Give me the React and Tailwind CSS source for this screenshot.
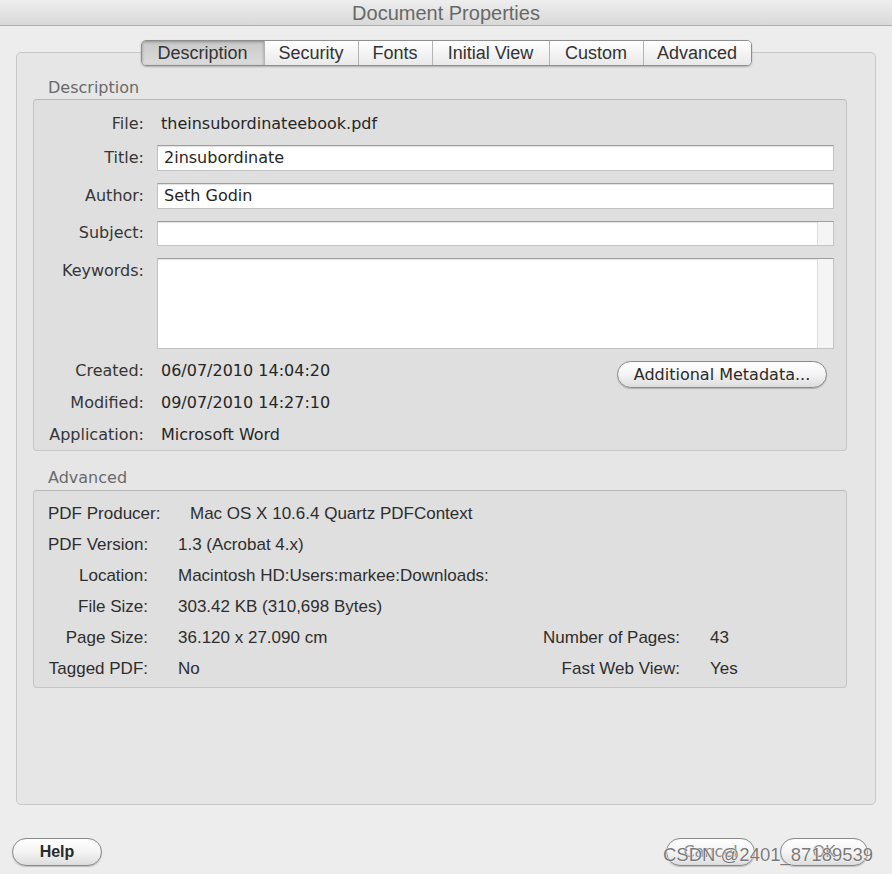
import React from "react";

const tabs = [
  { label: "Description", w: "w-[122px]", active: true },
  { label: "Security", w: "w-[94px]" },
  { label: "Fonts", w: "w-[74px]" },
  { label: "Initial View", w: "w-[117px]" },
  { label: "Custom", w: "w-[94px]" },
  { label: "Advanced", w: "w-[108px]" },
];

function Field({ h = "h-[26px]", scroll = false, children }) {
  return (
    <div
      className={`relative flex-1 ${h} bg-white border border-[#c3c3c3] border-t-[#9e9e9e] shadow-[inset_0_1px_1px_rgba(0,0,0,0.12)] flex ${
        scroll ? "items-start" : "items-center"
      }`}
    >
      <div className="flex-1 pl-[6px] text-[16px] leading-[24px] text-[#262626]">{children}</div>
      {scroll && <div className="w-[16px] self-stretch border-l border-[#dcdcdc] bg-[#f5f5f5]" />}
    </div>
  );
}

function PillButton({ w, h = "h-[28px]", children, bold = false, extra = "" }) {
  return (
    <div
      className={`${w} ${h} shrink-0 rounded-full border border-[#8a8a8a] bg-gradient-to-b from-[#ffffff] via-[#f4f4f4] to-[#dddddd] shadow-[0_1px_1px_rgba(0,0,0,0.2),inset_0_0_1px_rgba(0,0,0,0.15)] flex items-center justify-center ${extra}`}
    >
      <span
        className={
          bold
            ? "font-['Liberation_Sans',sans-serif] font-bold text-[16px] text-[#2a2a2a]"
            : "font-['DejaVu_Sans',sans-serif] text-[16px] text-[#2a2a2a]"
        }
      >
        {children}
      </span>
    </div>
  );
}

function DescRow({ label, children, mt, top = false, fixed = false }) {
  return (
    <div className={`flex ${top ? "items-start" : "items-center"} ${fixed ? "h-[26px]" : ""} ${mt}`}>
      <div className="w-[110px] text-right text-[16px] leading-[26px] text-[#363636] whitespace-nowrap">{label}</div>
      <div className="ml-[13px] flex-1 flex items-center h-full">{children}</div>
    </div>
  );
}

function AdvRow({ label, value, rlabel, rvalue, producer = false }) {
  return (
    <div className="h-[31px] flex items-center">
      <div className={`w-[100px] whitespace-nowrap ${producer ? "text-left" : "text-right"}`}>{label}</div>
      <div className={`${producer ? "ml-[42px] w-[320px]" : "ml-[30px] w-[332px]"} whitespace-nowrap`}>{value}</div>
      <div className="w-[170px] text-right whitespace-nowrap">{rlabel}</div>
      <div className="ml-[30px] whitespace-nowrap">{rvalue}</div>
    </div>
  );
}

export default function App() {
  return (
    <div className="w-[892px] h-[874px] bg-[#ededed] flex flex-col relative overflow-hidden font-['DejaVu_Sans',sans-serif] text-[#2b2b2b]">
      {/* title bar */}
      <div className="h-[26px] shrink-0 flex items-center justify-center bg-gradient-to-b from-[#eeeeee] to-[#d9d9d9] border-b border-[#b0b0b0] font-['Liberation_Sans',sans-serif] text-[20px] text-[#686868]">
        Document Properties
      </div>

      {/* tabs */}
      <div className="flex justify-center mt-[14px] -mb-[14px] relative z-10">
        <div className="flex h-[26px] rounded-[5px] border border-[#8e8e8e] overflow-hidden shadow-[0_1px_2px_rgba(0,0,0,0.25)] font-['Liberation_Sans',sans-serif] text-[18px] text-[#333]">
          {tabs.map((t, i) => (
            <div
              key={t.label}
              className={`${t.w} flex items-center justify-center ${i > 0 ? "border-l border-[#b5b5b5]" : ""} ${
                t.active
                  ? "bg-gradient-to-b from-[#c9c9c9] to-[#dcdcdc] shadow-[inset_0_1px_3px_rgba(0,0,0,0.3)]"
                  : "bg-gradient-to-b from-[#ffffff] to-[#e9e9e9]"
              }`}
            >
              {t.label}
            </div>
          ))}
        </div>
      </div>

      {/* panel */}
      <div className="mx-[16px] h-[753px] shrink-0 rounded-[5px] border border-[#c8c8c8] bg-[#e6e6e6] pl-[16px] pr-[28px] pt-[25px]">
        <div className="pl-[15px] text-[16px] leading-[20px] text-[#6a6a6a] mb-[1px]">Description</div>
        <div className="h-[352px] rounded-[4px] border border-[#c4c4c4] border-t-[#b8b8b8] bg-[#dfdfdf] pr-[12px] pt-[11px]">
          <DescRow label="File:" mt="" fixed>
            <div className="pl-[4px] text-[16px] leading-[26px] text-[#262626]">theinsubordinateebook.pdf</div>
          </DescRow>
          <DescRow label="Title:" mt="mt-[8px]">
            <Field>2insubordinate</Field>
          </DescRow>
          <DescRow label="Author:" mt="mt-[12px]">
            <Field>Seth Godin</Field>
          </DescRow>
          <DescRow label="Subject:" mt="mt-[11px]">
            <Field h="h-[25px]" scroll>
              {""}
            </Field>
          </DescRow>
          <DescRow label="Keywords:" mt="mt-[12px]" top>
            <Field h="h-[91px]" scroll>
              {""}
            </Field>
          </DescRow>
          <DescRow label="Created:" mt="mt-[9px]" fixed>
            <div className="pl-[4px] text-[16px] leading-[26px] text-[#262626]">06/07/2010 14:04:20</div>
            <PillButton w="w-[210px]" h="h-[27px]" extra="ml-auto mr-[7px] self-start mt-[3px]">
              Additional Metadata...
            </PillButton>
          </DescRow>
          <DescRow label="Modified:" mt="mt-[6px]" fixed>
            <div className="pl-[4px] text-[16px] leading-[26px] text-[#262626]">09/07/2010 14:27:10</div>
          </DescRow>
          <DescRow label="Application:" mt="mt-[6px]" fixed>
            <div className="pl-[4px] text-[16px] leading-[26px] text-[#262626]">Microsoft Word</div>
          </DescRow>
        </div>

        <div className="mt-[17px] pl-[15px] text-[16px] leading-[20px] text-[#6a6a6a] mb-[2px]">Advanced</div>
        <div className="h-[198px] rounded-[4px] border border-[#c4c4c4] border-t-[#b8b8b8] bg-[#dfdfdf] pl-[14px] pt-[7px] font-['Liberation_Sans',sans-serif] text-[17px] text-[#2e2e2e]">
          <AdvRow producer label="PDF Producer:" value="Mac OS X 10.6.4 Quartz PDFContext" />
          <AdvRow label="PDF Version:" value="1.3 (Acrobat 4.x)" />
          <AdvRow label="Location:" value="Macintosh HD:Users:markee:Downloads:" />
          <AdvRow label="File Size:" value="303.42 KB (310,698 Bytes)" />
          <AdvRow label="Page Size:" value="36.120 x 27.090 cm" rlabel="Number of Pages:" rvalue="43" />
          <AdvRow label="Tagged PDF:" value="No" rlabel="Fast Web View:" rvalue="Yes" />
        </div>
      </div>

      {/* bottom buttons */}
      <div className="mt-[33px] flex items-center pl-[12px] pr-[24px]">
        <PillButton w="w-[90px]" bold>
          Help
        </PillButton>
        <div className="ml-auto flex items-center gap-[25px]">
          <PillButton w="w-[89px]">
            <span className="text-[#8a8a8a]">Cancel</span>
          </PillButton>
          <PillButton w="w-[88px]">
            <span className="text-[#8a8a8a]">OK</span>
          </PillButton>
        </div>
      </div>

      {/* watermark */}
      <div className="absolute left-[663px] top-[843px] font-['Liberation_Sans',sans-serif] text-[18.5px] leading-[24px] text-[#7a7a7a] [text-shadow:0_0_1px_#fff,0_0_1px_#fff,0_0_1px_#fff] whitespace-nowrap">
        CSDN @2401_87189539
      </div>
    </div>
  );
}
